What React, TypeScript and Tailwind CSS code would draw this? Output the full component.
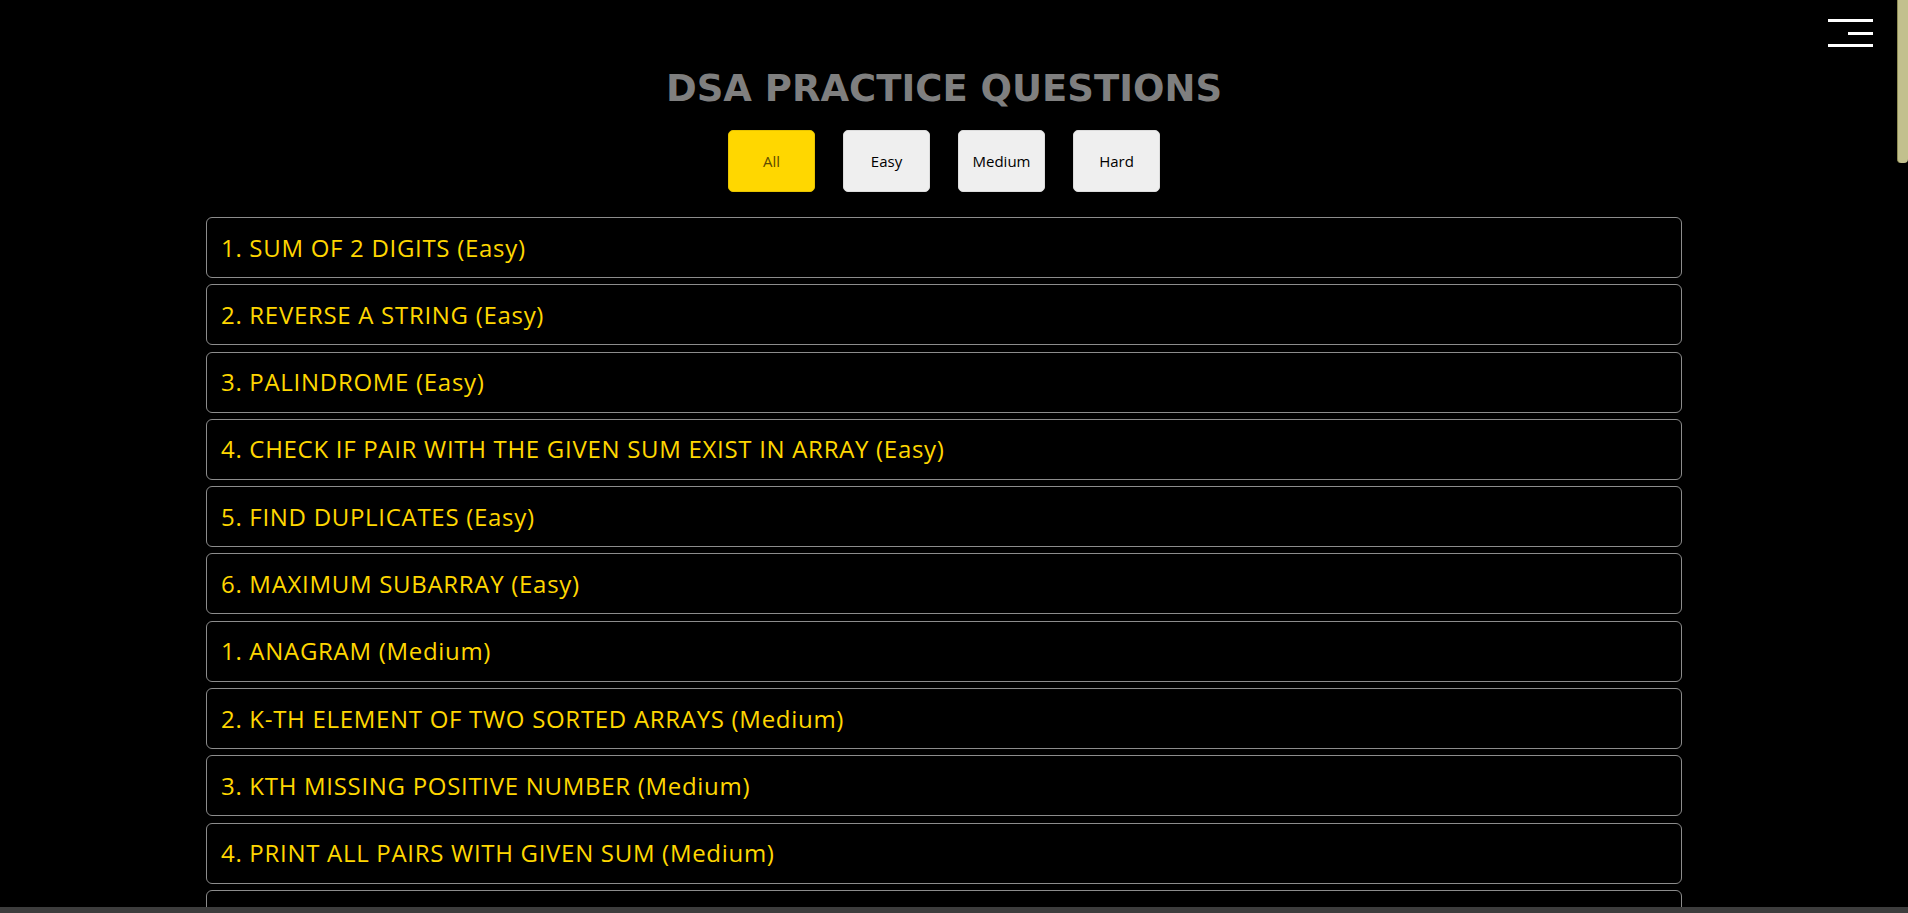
const questions = [
  '1. SUM OF 2 DIGITS (Easy)',
  '2. REVERSE A STRING (Easy)',
  '3. PALINDROME (Easy)',
  '4. CHECK IF PAIR WITH THE GIVEN SUM EXIST IN ARRAY (Easy)',
  '5. FIND DUPLICATES (Easy)',
  '6. MAXIMUM SUBARRAY (Easy)',
  '1. ANAGRAM (Medium)',
  '2. K-TH ELEMENT OF TWO SORTED ARRAYS (Medium)',
  '3. KTH MISSING POSITIVE NUMBER (Medium)',
  '4. PRINT ALL PAIRS WITH GIVEN SUM (Medium)',
  '',
]

const filters = ['All', 'Easy', 'Medium', 'Hard']

export default function App() {
  const active = 'All'

  return (
    <div className="h-[913px] overflow-hidden bg-black flex flex-col font-['Open_Sans',sans-serif]">
      <div className="flex flex-1 min-h-0">
        <main className="relative flex-1 min-w-0 overflow-hidden">
          {/* hamburger */}
          <button className="absolute top-[19px] left-[1828px] w-[45px] flex flex-col items-end gap-[9.5px]">
            <span className="block h-[3px] w-[45px] bg-white" />
            <span className="block h-[3px] w-[25px] bg-white" />
            <span className="block h-[3px] w-[45px] bg-white" />
          </button>

          <div className="ml-[206px] w-[1476px] flex flex-col">
            <h1 className="mt-[67px] text-center text-[37px] leading-[44px] font-bold text-[#7f7f7f] font-['DejaVu_Sans',sans-serif]">
              DSA PRACTICE QUESTIONS
            </h1>

            <div className="mt-[19px] flex justify-center gap-[28px]">
              {filters.map((f) => (
                <button
                  key={f}
                  className={
                    f === active
                      ? 'w-[87px] h-[62px] rounded-[5px] bg-[#ffd700] border border-[#e8c400] text-[15px] text-[#5e4b00]'
                      : 'w-[87px] h-[62px] rounded-[5px] bg-[#efefef] border border-[#dcdcdc] text-[15px] text-black'
                  }
                >
                  {f}
                </button>
              ))}
            </div>

            <div className="mt-[25px] flex flex-col gap-[6.3px]">
              {questions.map((q, i) => (
                <div
                  key={i}
                  className="h-[61px] shrink-0 rounded-[6px] border border-[#8c8c8c] px-[14px] flex items-center text-[24px] tracking-[0.7px] text-[#ffd700]"
                >
                  {q}
                </div>
              ))}
            </div>
          </div>
        </main>

        {/* scrollbar */}
        <div className="w-[11px] shrink-0 bg-black">
          <div className="h-[163px] rounded-b-[4px] bg-[#c2c08d] border-l border-[#8e8c55]" />
        </div>
      </div>
      <div className="h-[6px] shrink-0 bg-[#3d3d3d]" />
    </div>
  )
}
